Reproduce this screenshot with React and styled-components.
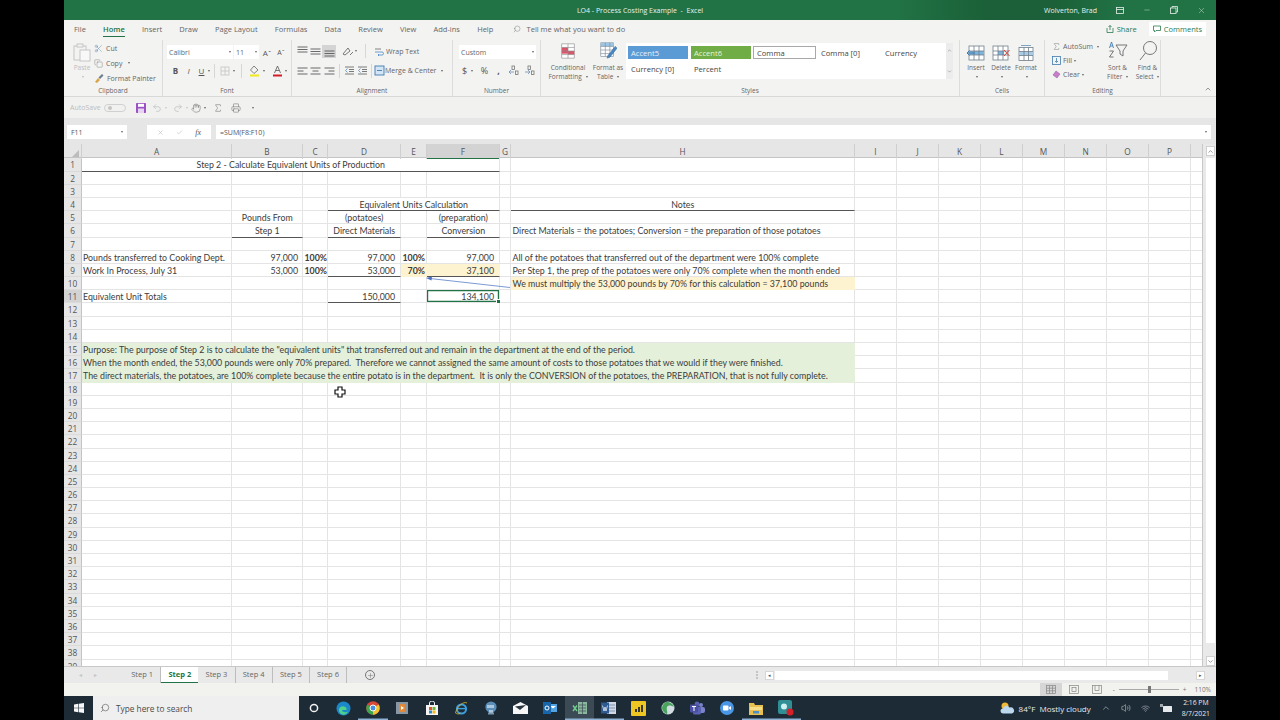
import React from 'react';
import styled, { createGlobalStyle } from 'styled-components';
import { Scissors, Copy, Search, X, Minus, ChevronUp, ChevronDown, Check, Plus, Wifi, Volume2, Undo2, Redo2, Sigma, Printer, Hand } from 'lucide-react';

const Global = createGlobalStyle`
  html, body { margin: 0; padding: 0; background: #000; }
  * { box-sizing: border-box; }
`;

const Screen = styled.div`
  width: 1280px;
  height: 720px;
  padding: 0 64px;
  background: #000;
  overflow: hidden;
  font-family: "Open Sans", "Noto Sans", sans-serif;
`;
const Win = styled.div`
  width: 1152px;
  height: 720px;
  display: flex;
  flex-direction: column;
  background: #f3f3f2;
  color: #555;
`;

/* title bar */
const TitleBar = styled.div`
  height: 20px;
  flex: none;
  display: grid;
  grid-template-columns: 1fr auto 1fr;
  align-items: center;
  background: linear-gradient(90deg, #217346 0%, #217346 72%, #1b6038 80%, #1b6038 86%, #217346 92%);
  color: #e8f1ec;
  font-size: 7px;
  white-space: pre;
`;
const TitleRight = styled.div`
  grid-column: 3;
  display: flex;
  align-items: center;
  justify-content: flex-end;
  gap: 19px;
  padding-right: 10px;
  svg { display: block; }
`;
const UserName = styled.span`
  margin-right: 0;
`;

/* menu tabs */
const MenuRow = styled.div`
  height: 18px;
  flex: none;
  display: flex;
  align-items: center;
  padding-left: 10px;
  gap: 17.2px;
  font-size: 7.5px;
  background: #f3f3f2;
`;
const MenuTab = styled.span`
  position: relative;
  color: ${p => (p.$on ? '#217346' : '#666')};
  font-weight: ${p => (p.$on ? 600 : 400)};
  ${p => p.$on && `
    &::after {
      content: '';
      position: absolute;
      left: 0; right: 0; bottom: -3px;
      height: 1.5px;
      background: #217346;
    }
  `}
`;
const TellMe = styled.span`
  display: flex;
  align-items: center;
  gap: 6px;
  color: #666;
  margin-left: 2px;
`;
const MenuRight = styled.div`
  margin-left: auto;
  display: flex;
  align-items: center;
  gap: 12px;
  padding-right: 10px;
`;
const ShareBtn = styled.span`
  display: flex;
  align-items: center;
  gap: 3px;
  color: #2c7a52;
`;
const CommentBtn = styled(ShareBtn)`
  background: #fff;
  padding: 2px 4px;
  height: 14px;
`;

/* ribbon */
const Ribbon = styled.div`
  height: 59px;
  flex: none;
  display: flex;
  background: #f3f3f2;
  border-bottom: 1px solid #d8d8d8;
  font-size: 7px;
  color: #666;
  position: relative;
`;
const Group = styled.div`
  width: ${p => p.$w}px;
  flex: none;
  display: flex;
  flex-direction: column;
  border-right: 1px solid #dcdcdc;
  margin: 2px 0 0;
`;
const GroupBody = styled.div`
  flex: 1;
  display: flex;
  padding: ${p => p.$pad || '0 0 0 4px'};
  gap: ${p => p.$gap || 0}px;
  min-height: 0;
`;
const GroupLabel = styled.div`
  height: 11px;
  text-align: center;
  font-size: 6.5px;
  line-height: 11px;
  color: #666;
`;
const Col = styled.div`
  display: flex;
  flex-direction: column;
  gap: ${p => p.$gap || 0}px;
  align-items: ${p => p.$align || 'stretch'};
  padding-top: ${p => p.$top || 0}px;
  width: ${p => (p.$w ? `${p.$w}px` : 'auto')};
`;
const Row = styled.div`
  display: flex;
  align-items: center;
  gap: ${p => p.$gap || 0}px;
  height: ${p => (p.$h ? `${p.$h}px` : 'auto')};
`;
const TinyBtn = styled.span`
  display: flex;
  align-items: center;
  justify-content: center;
  width: ${p => p.$w || 13}px;
  height: 13px;
  background: ${p => (p.$on ? '#d4d4d4' : 'transparent')};
  font-size: ${p => p.$fs || 8}px;
  font-weight: ${p => (p.$bold ? 700 : 400)};
  font-style: ${p => (p.$italic ? 'italic' : 'normal')};
  text-decoration: ${p => (p.$under ? 'underline' : 'none')};
  color: #555;
`;
const ComboBox = styled.span`
  display: flex;
  align-items: center;
  justify-content: space-between;
  width: ${p => p.$w}px;
  height: 14px;
  padding: 0 2px;
  background: #fff;
  margin-right: 1px;
  font-size: 7px;
  color: #666;
`;
const Caret = styled.span`
  width: 0;
  height: 0;
  border-left: 1.5px solid transparent;
  border-right: 1.5px solid transparent;
  border-top: 2px solid ${p => p.$color || '#666'};
  flex: none;
  margin-left: ${p => p.$ml || 0}px;
  margin-right: ${p => p.$mr || 0}px;
`;
const InlineCaret = styled(Caret)`
  display: inline-block;
  vertical-align: middle;
  margin-left: 2px;
`;
const VLine = styled.span`
  width: 1px;
  height: 14px;
  background: #d6d6d6;
  margin: 0 ${p => p.$m || 3}px;
`;
const BigLabel = styled.div`
  text-align: center;
  line-height: 9px;
  font-size: 6.5px;
  color: ${p => p.$color || '#666'};
`;
const Gallery = styled.div`
  width: 327px;
  height: 36px;
  margin: 3px 0 0 -2px;
  background: #fff;
  display: grid;
  grid-template-columns: 63px 62px 65px 64px 1fr 7px;
  grid-template-rows: 16px 18px;
  padding: 3px 0 0 2px;
`;
const StyleCell = styled.div`
  display: flex;
  align-items: center;
  height: 13px;
  width: 60px;
  padding-left: 3px;
  font-size: 7.6px;
  background: ${p => p.$bg || 'transparent'};
  color: ${p => p.$fg || '#444'};
  border: ${p => (p.$box ? '1px solid #a8a8a8' : 'none')};
`;
const GalleryBar = styled.div`
  grid-column: 6;
  grid-row: 1 / 3;
  margin-top: -3px;
  height: 36px;
  width: 7px;
  background: #ececec;
  display: flex;
  flex-direction: column;
  align-items: center;
  justify-content: space-between;
  padding: 5px 0;
`;
const Collapse = styled.span`
  position: absolute;
  right: 4px;
  bottom: 1px;
  color: #666;
`;

/* quick access */
const Qat = styled.div`
  height: 21px;
  flex: none;
  display: flex;
  align-items: center;
  padding-left: 6px;
  gap: 3px;
  background: #f1f1f0;
  font-size: 7px;
  color: #bdbdbd;
`;
const Toggle = styled.span`
  width: 22px;
  height: 8px;
  border: 1px solid #d0d0d0;
  border-radius: 4px;
  margin-right: 7px;
  display: flex;
  align-items: center;
  padding-left: 3px;
  &::before {
    content: '';
    width: 4px;
    height: 4px;
    border-radius: 50%;
    background: #c4c4c4;
  }
`;
const QatSlot = styled.span`
  display: flex;
  margin-left: ${p => p.$ml || 0}px;
`;

/* formula bar */
const FormulaBand = styled.div`
  height: 26px;
  flex: none;
  display: flex;
  gap: 5px;
  padding: 7px 5px 5px 3px;
  background: #e6e6e6;
  font-size: 7px;
  color: #555;
`;
const FormulaBox = styled.div`
  display: flex;
  align-items: center;
  background: #fff;
  height: 14px;
  width: ${p => (p.$w ? `${p.$w}px` : 'auto')};
  flex: ${p => (p.$w ? 'none' : 1)};
  justify-content: ${p => p.$just || 'flex-start'};
  padding: 0 4px;
  margin-right: ${p => p.$mr || 0}px;
`;
const Fx = styled.span`
  font-family: "Liberation Serif", serif;
  font-style: italic;
  font-size: 8px;
  color: #555;
`;

/* sheet */
const Sheet = styled.div`
  height: 522px;
  flex: none;
  display: flex;
  background: #fff;
`;
const GridWrap = styled.div`
  position: relative;
  width: 1139px;
  overflow: hidden;
  border-right: 1px solid #c8c8c8;
`;
const COLS = '18px 150px 71px 25px 73px 26px 73px 11px 344px 42px 42px 42px 42px 42px 42px 42px 42px 12px';
const HeadRow = styled.div`
  display: grid;
  grid-template-columns: ${COLS};
  height: 14.4px;
  background: #e6e6e6;
  border-bottom: 1px solid #c4c4c4;
`;
const ColHead = styled.div`
  font-size: 8.3px;
  line-height: 15px;
  text-align: center;
  color: #555;
  border-right: 1px solid #cfcfcf;
  background: ${p => (p.$on ? '#d3d3d3' : 'transparent')};
  box-shadow: ${p => (p.$on ? 'inset 0 -1px 0 #217346' : 'none')};
`;
const Corner = styled.div`
  position: relative;
  border-right: 1px solid #cfcfcf;
  &::after {
    content: '';
    position: absolute;
    right: 2px;
    bottom: 2px;
    border-left: 7px solid transparent;
    border-bottom: 7px solid #bcbcbc;
  }
`;
const Grid = styled.div`
  display: grid;
  grid-template-columns: ${COLS};
  grid-auto-rows: 13.19px;
  font-family: Lato, "Noto Sans", sans-serif;
  font-size: 8.82px;
  color: #3c3c3c;
`;
const RowHead = styled.div`
  background: ${p => (p.$on ? '#d3d3d3' : '#e6e6e6')};
  border-right: 1px solid #c4c4c4;
  border-bottom: 1px solid #dadada;
  font-family: "Open Sans", sans-serif;
  font-size: 8.3px;
  line-height: 13px;
  text-align: center;
  color: #555;
`;
const Cell = styled.div`
  grid-column: span ${p => p.$span || 1};
  position: relative;
  min-width: 0;
  white-space: pre;
  line-height: 13.8px;
  padding: 0 ${p => p.$pr ?? 1}px 0 ${p => p.$pl ?? 1.5}px;
  text-align: ${p => p.$align || 'left'};
  font-weight: ${p => (p.$bold ? 700 : 400)};
  background: ${p => p.$fill || 'transparent'};
  border-right: 1px solid ${p => p.$fill || '#e4e4e4'};
  border-bottom: 1px solid ${p => (p.$under ? '#555' : p.$fill || '#e4e4e4')};
  ${p => p.$sel && `
    box-shadow: inset 0 0 0 1.2px #217346;
    &::after {
      content: '';
      position: absolute;
      right: -2px;
      bottom: -2px;
      width: 3.5px;
      height: 3.5px;
      background: #217346;
      border: 0.5px solid #fff;
    }
  `}
`;
const ArrowLayer = styled.svg`
  position: absolute;
  left: 360px;
  top: 130px;
  pointer-events: none;
`;
const CursorMark = styled.svg`
  position: absolute;
  left: 270px;
  top: 242px;
  pointer-events: none;
`;
const VScroll = styled.div`
  width: 13px;
  background: #e9e9e9;
  display: flex;
  flex-direction: column;
  justify-content: space-between;
  align-items: center;
  padding: 2px 0 0 1px;
`;
const ScrollArrow = styled.span`
  width: 9px;
  height: 10px;
  flex: none;
  display: flex;
  align-items: center;
  justify-content: center;
  background: #fff;
  border: 1px solid #d0d0d0;
  color: #555;
`;
const VThumb = styled.div`
  flex: 1;
  width: 9px;
  background: #fff;
  margin: 2px 0 13px;
`;

/* sheet tabs */
const TabsBar = styled.div`
  height: 17px;
  flex: none;
  display: flex;
  align-items: center;
  background: #e9e9e9;
  border-top: 1px solid #c8c8c8;
  font-size: 7.5px;
  color: #666;
`;
const TabNav = styled.span`
  width: 60px;
  display: flex;
  gap: 12px;
  padding-left: 15px;
  color: #c4c4c4;
  font-size: 6px;
`;
const SheetTab = styled.span`
  width: 37.2px;
  height: 16px;
  line-height: 15px;
  text-align: center;
  flex: none;
  border-right: 1px solid #bdbdbd;
  ${p => p.$on && `
    background: #fff;
    color: #217346;
    font-weight: 700;
    border-right: none;
    border-bottom: 1.5px solid #217346;
  `}
`;
const AddSheet = styled.span`
  width: 10px;
  height: 10px;
  margin-left: 18px;
  border: 1px solid #777;
  border-radius: 50%;
  display: flex;
  align-items: center;
  justify-content: center;
  color: #666;
`;
const Grip = styled.span`
  margin-left: auto;
  margin-right: 7px;
  width: 2px;
  height: 8px;
  border-left: 2px dotted #c4c4c4;
`;
const HScroll = styled.div`
  width: 440px;
  height: 9px;
  margin-right: 11px;
  display: flex;
  align-items: stretch;
  gap: 1px;
`;
const HArrow = styled.span`
  width: 9px;
  flex: none;
  background: #fff;
  border: 1px solid #d6d6d6;
  display: flex;
  align-items: center;
  justify-content: center;
  font-size: 5px;
  color: #555;
`;
const HThumb = styled.span`
  flex: 1;
  background: #fff;
  margin-right: 27px;
`;

/* status bar */
const StatusBar = styled.div`
  height: 13px;
  flex: none;
  display: flex;
  align-items: center;
  justify-content: flex-end;
  background: #f2f2ee;
  font-size: 6.5px;
  color: #777;
  padding-right: 5px;
`;
const ViewBtn = styled.span`
  width: 22px;
  height: 13px;
  display: flex;
  align-items: center;
  justify-content: center;
  background: ${p => (p.$on ? '#d6d6d6' : 'transparent')};
  margin-right: 1px;
`;
const ZoomTrack = styled.span`
  position: relative;
  width: 60px;
  height: 1px;
  margin: 0 4px;
  background: #aaa;
  &::after {
    content: '';
    position: absolute;
    left: 29px;
    top: -3px;
    width: 3px;
    height: 7px;
    background: #777;
  }
`;
const StatusText = styled.span`
  margin-left: ${p => p.$ml || 0}px;
`;

/* taskbar */
const Taskbar = styled.div`
  height: 24px;
  flex: none;
  display: flex;
  align-items: center;
  background: #1d2b36;
  color: #e6e9ec;
  font-size: 8px;
`;
const StartBtn = styled.span`
  width: 29px;
  display: flex;
  justify-content: center;
`;
const SearchBox = styled.div`
  width: 206px;
  height: 24px;
  background: #efefef;
  display: flex;
  align-items: center;
  gap: 6px;
  padding-left: 7px;
  color: #4a4a4a;
  font-size: 8.3px;
`;
const TaskIcons = styled.div`
  display: flex;
`;
const TaskIcon = styled.span`
  width: 29.5px;
  height: 24px;
  display: flex;
  align-items: center;
  justify-content: center;
  background: ${p => (p.$active ? '#3b4a55' : 'transparent')};
  box-shadow: ${p => (p.$open ? 'inset 0 -1.5px 0 #8fb4d6' : 'none')};
`;
const Tray = styled.div`
  margin-left: auto;
  display: flex;
  align-items: center;
  gap: 10px;
  padding-right: 6px;
`;
const Weather = styled.span`
  display: flex;
  align-items: center;
  gap: 4px;
  white-space: pre;
`;
const Clock = styled.span`
  text-align: center;
  font-size: 6.8px;
  line-height: 11px;
`;

/* small drawn icons */
const Lines = ({ w = [10, 10, 10], y = [3, 6, 9], x = 'left' }) => (
  <svg width="11" height="12" viewBox="0 0 11 12" stroke="#5a5a5a" strokeWidth="0.9">
    {w.map((l, i) => {
      const s = x === 'left' ? 0.5 : x === 'center' ? (11 - l) / 2 : 10.5 - l;
      return <line key={i} x1={s} x2={s + l} y1={y[i]} y2={y[i]} />;
    })}
  </svg>
);
const Indent = () => (
  <svg width="11" height="11" viewBox="0 0 11 11" fill="none" stroke="#5a5a5a" strokeWidth="0.8">
    <path d="M1 2h9M5 4.5h5M5 6.5h5M1 9h9" />
    <path d="M3.5 3.5 1.5 5.5l2 2" stroke="#4a86c5" />
  </svg>
);
const InsertCellIcon = () => (
  <svg width="20" height="18" viewBox="0 0 20 18" fill="none" stroke="#6f7f8c" strokeWidth="0.8">
    <rect x="3" y="2" width="15" height="14" fill="#fff" />
    <rect x="3" y="7" width="15" height="4" fill="#7fb4dc" stroke="none" />
    <path d="M3 7h15M3 11h15M8 2v14M13 2v14" />
    <path d="M9 9H1M3.500 6.500 1 9l2.500 2.500" stroke="#3e7cb1" strokeWidth="1" />
  </svg>
);
const DeleteCellIcon = () => (
  <svg width="20" height="18" viewBox="0 0 20 18" fill="none" stroke="#6f7f8c" strokeWidth="0.8">
    <rect x="2" y="2" width="15" height="14" fill="#fff" />
    <rect x="7" y="7" width="6" height="4" fill="#7fb4dc" stroke="none" />
    <path d="M2 7h15M2 11h15M7 2v14M12 2v14" />
    <path d="M13 6l5.500 6M18.500 6 13 12" stroke="#d2443c" strokeWidth="1" />
  </svg>
);
const FormatCellIcon = () => (
  <svg width="20" height="18" viewBox="0 0 20 18" fill="none" stroke="#6f7f8c" strokeWidth="0.8">
    <rect x="3" y="3.500" width="14" height="13" fill="#fff" />
    <rect x="3" y="7.500" width="14" height="4" fill="#a9cbe6" stroke="none" />
    <path d="M3 7.500h14M3 11.500h14M8 3.500v13M12.500 3.500v13" />
    <path d="M5 1.500h10" stroke="#5d93c0" />
  </svg>
);
const CondIcon = () => (
  <svg width="16" height="16" viewBox="0 0 16 18" fill="none" stroke="#8a8a8a" strokeWidth="0.7">
    <rect x="1" y="1" width="14" height="16" fill="#fff" />
    <rect x="1" y="5" width="7" height="7" fill="#d9566a" stroke="none" />
    <rect x="8" y="9" width="7" height="4" fill="#d9566a" stroke="none" />
    <path d="M1 5h14M1 9h14M1 13h14M8 1v16" />
  </svg>
);
const FmtTableIcon = () => (
  <svg width="18" height="18" viewBox="0 0 20 20" fill="none" stroke="#7b8a96" strokeWidth="0.7">
    <rect x="2" y="2" width="14" height="15" fill="#fff" />
    <rect x="2" y="2" width="14" height="4" fill="#9cc6e4" stroke="none" />
    <path d="M2 6h14M2 10h14M2 14h14M7 2v15M12 2v15" />
    <path d="M18 6 10 16l-1 3 3-1 8-10z" fill="#4a86c5" stroke="#3a6f9e" />
  </svg>
);
const PasteIcon = () => (
  <svg width="18" height="19" viewBox="0 0 18 19" fill="#f3f3f2" stroke="#c6c6c6" strokeWidth="1">
    <rect x="1" y="3" width="12" height="14" />
    <rect x="4" y="1" width="6" height="3" />
    <rect x="7" y="7" width="10" height="11" fill="#f8f8f8" />
  </svg>
);
const PainterIcon = () => (
  <svg width="10" height="10" viewBox="0 0 10 10" fill="none">
    <path d="M1 9 4 5l2 2-3 3z" fill="#d9a54a" />
    <path d="M4.5 4.5 8 1l1.5 1.5L6 6z" fill="#6a7d8e" />
  </svg>
);
const BorderIcon = () => (
  <svg width="10" height="10" viewBox="0 0 10 10" fill="#f3f3f2" stroke="#c4c4c4" strokeWidth="0.8">
    <rect x="1" y="1" width="8" height="8" />
    <path d="M5 1v8M1 5h8" />
  </svg>
);
const FillIcon = () => (
  <svg width="11" height="12" viewBox="0 0 11 12">
    <path d="M5 1 9 5 5 8.5 1.5 5z" fill="none" stroke="#666" strokeWidth="0.8" />
    <rect x="1" y="9.5" width="9" height="2" fill="#f2ea1c" />
  </svg>
);
const ColorAIcon = () => (
  <svg width="11" height="12" viewBox="0 0 11 12">
    <path d="M2.5 8 5.5 1l3 7M3.7 5.5h3.6" fill="none" stroke="#666" strokeWidth="0.9" />
    <rect x="1" y="9.5" width="9" height="2" fill="#d11f2a" />
  </svg>
);
const DecimalIcon = ({ flip }) => (
  <svg width="11" height="11" viewBox="0 0 11 11" fill="none" stroke="#6a90b4" strokeWidth="0.8">
    <path d={flip ? 'M6 7h-5M4 5 6 7 4 9' : 'M1 7h5M3 5 1 7l2 2'} />
    <rect x="4" y="1" width="2.5" height="3.5" stroke="#777" />
    <rect x="7.5" y="6" width="2.5" height="3.5" stroke="#777" />
  </svg>
);
const WrapIcon = () => (
  <svg width="10" height="11" viewBox="0 0 10 11" fill="none" stroke="#4a86c5" strokeWidth="0.8">
    <path d="M1 6h7a1.5 1.5 0 0 1 0 3H4M5 8 4 9l1 1" />
    <path d="M1 3h6" stroke="#666" />
  </svg>
);
const MergeIcon = () => (
  <svg width="11" height="11" viewBox="0 0 11 11" fill="#d4e6f5" stroke="#3e7cb1" strokeWidth="0.9">
    <rect x="1" y="1" width="9" height="9" />
    <path d="M3 5.5h5" />
  </svg>
);
const OrientIcon = () => (
  <svg width="12" height="11" viewBox="0 0 12 11" fill="none" stroke="#6a6a6a" strokeWidth="0.9">
    <path d="M1 8 6 2l2 3-5 4zM8 9l3-3" />
  </svg>
);
const SortIcon = () => (
  <svg width="20" height="20" viewBox="0 0 20 20" fill="none" stroke="#6a6a6a" strokeWidth="0.9">
    <path d="M1.5 8 3.5 2l2 6M2.3 6h2.4" stroke="#3e7cb1" />
    <path d="M1.5 11h4l-4 6h4" />
    <path d="M8 5h11l-4 6v5l-3-2v-3z" />
  </svg>
);
const FindIcon = () => (
  <svg width="20" height="21" viewBox="0 0 20 21" fill="none" stroke="#6a6a6a" strokeWidth="0.9">
    <circle cx="12" cy="8" r="6.5" />
    <path d="M7.5 13 2 20" />
  </svg>
);
const SaveIcon = () => (
  <svg width="10" height="10" viewBox="0 0 10 10">
    <rect width="10" height="10" rx="0.8" fill="#9a52c4" />
    <rect x="2" y="0.800" width="6" height="3" fill="#fff" />
    <rect x="2" y="5.500" width="6" height="4.500" fill="#e6d4f0" />
  </svg>
);
const NormalViewIcon = () => (
  <svg width="10" height="9" viewBox="0 0 10 9" fill="none" stroke="#858585" strokeWidth="0.7">
    <rect x="0.500" y="0.500" width="9" height="8" />
    <path d="M0.500 3.200h9M0.500 5.800h9M3.500 0.500v8M6.500 0.500v8" />
  </svg>
);
const PageViewIcon = () => (
  <svg width="10" height="9" viewBox="0 0 10 9" fill="none" stroke="#858585" strokeWidth="0.7">
    <rect x="0.500" y="0.500" width="9" height="8" />
    <rect x="3" y="2.500" width="4" height="4" />
  </svg>
);
const BreakViewIcon = () => (
  <svg width="10" height="9" viewBox="0 0 10 9" fill="none" stroke="#858585" strokeWidth="0.7">
    <rect x="0.500" y="0.500" width="9" height="8" />
    <path d="M3 0.500v5h4v-5" />
  </svg>
);
const WinLogo = () => (
  <svg width="10" height="10" viewBox="0 0 10 10" fill="#f4f6f8">
    <path d="M0 1.4 4.2.8v3.9H0zM4.8.7 10 0v4.7H4.8zM0 5.3h4.2v3.9L0 8.6zM4.8 5.3H10V10l-5.2-.7z" />
  </svg>
);
const Ring = () => (
  <svg width="10" height="10" viewBox="0 0 10 10" fill="none" stroke="#f2f2f2" strokeWidth="1.5">
    <circle cx="5" cy="5" r="3.6" />
  </svg>
);
const Edge = () => (
  <svg width="15" height="15" viewBox="0 0 15 15">
    <circle cx="7.5" cy="7.5" r="7" fill="#1b88c9" />
    <path d="M3 9c0-3 3-4 5-3.6 2 .4 3 2 2.5 3.6H6c0 2 3 3 6 1.5-1 2.5-3.5 3.5-5.5 3C4 13 3 11 3 9z" fill="#4fd08c" />
  </svg>
);
const Chrome = () => (
  <svg width="14" height="14" viewBox="0 0 14 14">
    <circle cx="7" cy="7" r="6.8" fill="#d9473b" />
    <path d="M7 7 1.2 3.6A6.8 6.8 0 0 0 7 13.8z" fill="#3da54c" />
    <path d="M7 7v6.8A6.8 6.8 0 0 0 12.8 3.6z" fill="#f1c232" />
    <circle cx="7" cy="7" r="3" fill="#4a8fe0" stroke="#fff" />
  </svg>
);
const Slides = () => (
  <svg width="12" height="12" viewBox="0 0 12 12">
    <rect width="12" height="12" fill="#8796a2" />
    <rect x="3" y="2" width="6" height="8" fill="#e08a3c" />
    <path d="M5 4v4l3-2z" fill="#fff" />
  </svg>
);
const Store = () => (
  <svg width="14" height="14" viewBox="0 0 14 14">
    <path d="M1 4h12v10H1z" fill="#f4f4f4" />
    <path d="M4.5 4V2a2.5 2 0 0 1 5 0v2" fill="none" stroke="#f4f4f4" />
    <rect x="4" y="6" width="3" height="3" fill="#e2552d" />
    <rect x="7.5" y="6" width="3" height="3" fill="#6fb53b" />
    <rect x="4" y="9.5" width="3" height="3" fill="#2a8ad4" />
    <rect x="7.5" y="9.5" width="3" height="3" fill="#f3b61f" />
  </svg>
);
const IE = () => (
  <svg width="15" height="15" viewBox="0 0 15 15" fill="none">
    <circle cx="7.5" cy="8" r="4.6" stroke="#3ba0dd" strokeWidth="2" />
    <path d="M3 7.6h9" stroke="#3ba0dd" strokeWidth="1.4" />
    <path d="M13 2C10 0 3 5 1.5 12c3 2 5 0 5 0" stroke="#e8b92e" strokeWidth="0.8" />
  </svg>
);
const Globe = () => (
  <svg width="14" height="15" viewBox="0 0 14 15">
    <circle cx="7" cy="6" r="5.6" fill="#5b8fb9" />
    <path d="M3 4h7v3H3zM5 9h4v3H5z" fill="#a9c6de" />
    <rect x="4" y="11.5" width="6" height="2" fill="#7c98b0" />
  </svg>
);
const Mail = () => (
  <svg width="15" height="12" viewBox="0 0 15 12">
    <path d="M0 4 7.5 0 15 4v8H0z" fill="#f7f7f7" />
    <path d="M2 4.5 13 3 7 8z" fill="#29353f" />
  </svg>
);
const Outlook = () => (
  <svg width="14" height="12" viewBox="0 0 14 12">
    <rect x="5" y="2" width="9" height="8" fill="#52a3e0" />
    <path d="M7 4h6l-3 2.5z" fill="#fff" />
    <rect width="8" height="12" fill="#1766ac" />
    <circle cx="4" cy="6" r="2" fill="none" stroke="#fff" />
  </svg>
);
const ExcelIcon = () => (
  <svg width="15" height="14" viewBox="0 0 15 14">
    <rect x="6" y="1" width="9" height="12" fill="#8bb79d" />
    <path d="M7 4h7M7 7h7M7 10h7M10.5 1v12" stroke="#3b4a55" strokeWidth="0.7" />
    <path d="M1 4.5 5 10M5 4.5 1 10" stroke="#6fd08e" strokeWidth="1.4" />
  </svg>
);
const WordIcon = () => (
  <svg width="15" height="14" viewBox="0 0 15 14">
    <rect x="6" y="1" width="9" height="12" fill="#cfd8e3" />
    <path d="M8 4h6M8 7h6M8 10h6" stroke="#5a7a9e" strokeWidth="0.7" />
    <rect width="8" height="11" y="1.5" fill="#2e5a94" />
    <path d="M1.5 4.5 3 10l1-4 1 4 1.5-5.5" stroke="#fff" strokeWidth="0.7" fill="none" />
  </svg>
);
const PowerBi = () => (
  <svg width="15" height="15" viewBox="0 0 15 15">
    <rect width="15" height="15" rx="1" fill="#eec722" />
    <rect x="4" y="8" width="2" height="3" fill="#3a3a2a" />
    <rect x="7" y="6" width="2" height="5" fill="#3a3a2a" />
    <rect x="10" y="4" width="2" height="7" fill="#3a3a2a" />
  </svg>
);
const GreenGlobe = () => (
  <svg width="14" height="14" viewBox="0 0 14 14">
    <circle cx="7" cy="7" r="6.5" fill="#d2dde3" />
    <path d="M4 1.500C8 0 12 3 13 6c-3-2-6-2-7 0-1 2 1 5 0 7.300C3 12 1 9 1 7c0-2 1.500-4 3-5.500z" fill="#4aa35c" />
  </svg>
);
const Teams = () => (
  <svg width="15" height="14" viewBox="0 0 15 14">
    <circle cx="11" cy="4" r="2" fill="#7b83c9" />
    <rect x="9" y="6" width="6" height="6" rx="2" fill="#7b83c9" />
    <circle cx="7" cy="3" r="2.4" fill="#5a62b3" />
    <rect x="3" y="5.500" width="8" height="8" rx="1.500" fill="#5a62b3" />
    <rect y="3.500" width="8" height="8" rx="1" fill="#4a50a3" />
    <path d="M2 5.500h4M4 5.500v4.500" stroke="#fff" strokeWidth="1" />
  </svg>
);
const ZoomApp = () => (
  <svg width="14" height="14" viewBox="0 0 14 14">
    <circle cx="7" cy="7" r="7" fill="#4a96e6" />
    <rect x="3" y="4.500" width="5.500" height="5" rx="1" fill="#fff" />
    <path d="M9 6.500 11 5v4L9 7.500z" fill="#fff" />
  </svg>
);
const Folder = () => (
  <svg width="14" height="13" viewBox="0 0 14 13">
    <path d="M0 1h5l1 2h8v10H0z" fill="#e8c052" />
    <rect x="1" y="5" width="12" height="3" fill="#f5dd8a" />
    <rect x="4" y="9" width="6" height="2.500" fill="#4b90c8" />
  </svg>
);
const Recorder = () => (
  <svg width="16" height="16" viewBox="0 0 16 16">
    <rect width="14" height="14" rx="2" fill="#2f8f95" />
    <circle cx="6" cy="6.500" r="3" fill="#cfeff2" />
    <circle cx="12" cy="12" r="3.500" fill="#d5202a" />
  </svg>
);
const CloudSun = () => (
  <svg width="15" height="12" viewBox="0 0 15 12">
    <circle cx="5" cy="4" r="3.500" fill="#f0b93a" />
    <path d="M3 11.500a2.500 2.500 0 0 1 0-5 3.500 3.500 0 0 1 6.500-1 3 3 0 0 1 2.500 6z" fill="#bcd8ee" />
  </svg>
);
const BatteryMark = () => (
  <svg width="12" height="9" viewBox="0 0 12 9" fill="#e6e9ec">
    <rect x="3" y="2" width="9" height="6" rx="0.5" />
    <rect y="0" width="3" height="3" fill="#a0a8ae" />
  </svg>
);

/* sheet data */
const LETTERS = ['A', 'B', 'C', 'D', 'E', 'F', 'G', 'H', 'I', 'J', 'K', 'L', 'M', 'N', 'O', 'P', ''];
const YELLOW = '#fdf3d0';
const GREEN = '#e4f0da';

const SHEET = {
  1: { A: { span: 6, text: 'Step 2 - Calculate Equivalent Units of Production', align: 'center', under: true } },
  4: {
    D: { span: 3, text: 'Equivalent Units Calculation', align: 'center', under: true },
    H: { text: 'Notes', align: 'center', under: true },
  },
  5: {
    B: { text: 'Pounds From', align: 'center' },
    D: { text: '(potatoes)', align: 'center' },
    F: { text: '(preparation)', align: 'center' },
  },
  6: {
    B: { text: 'Step 1', align: 'center', under: true },
    D: { text: 'Direct Materials', align: 'center', under: true },
    F: { text: 'Conversion', align: 'center', under: true },
    H: { text: 'Direct Materials = the potatoes; Conversion = the preparation of those potatoes' },
  },
  8: {
    A: { text: 'Pounds transferred to Cooking Dept.', pl: 1 },
    B: { text: '97,000', align: 'right', pr: 4 },
    C: { text: '100%', align: 'right', bold: true },
    D: { text: '97,000', align: 'right', pr: 5 },
    E: { text: '100%', align: 'right', bold: true },
    F: { text: '97,000', align: 'right', pr: 5 },
    H: { text: 'All of the potatoes that transferred out of the department were 100% complete' },
  },
  9: {
    A: { text: 'Work In Process, July 31', pl: 1 },
    B: { text: '53,000', align: 'right', pr: 4 },
    C: { text: '100%', align: 'right', bold: true },
    D: { text: '53,000', align: 'right', pr: 5, under: true },
    E: { text: '70%', align: 'right', bold: true, fill: YELLOW },
    F: { text: '37,100', align: 'right', pr: 5, under: true, fill: YELLOW },
    H: { text: 'Per Step 1, the prep of the potatoes were only 70% complete when the month ended' },
  },
  10: { H: { text: 'We must multiply the 53,000 pounds by 70% for this calculation = 37,100 pounds', fill: YELLOW } },
  11: {
    A: { text: 'Equivalent Unit Totals', pl: 1 },
    D: { text: '150,000', align: 'right', pr: 5, under: true },
    F: { text: '134,100', align: 'right', pr: 5, sel: true },
  },
  15: { A: { span: 8, pl: 1, fill: GREEN, text: 'Purpose: The purpose of Step 2 is to calculate the "equivalent units" that transferred out and remain in the department at the end of the period.' } },
  16: { A: { span: 8, pl: 1, fill: GREEN, text: 'When the month ended, the 53,000 pounds were only 70% prepared.  Therefore we cannot assigned the same amount of costs to those potatoes that we would if they were finished.' } },
  17: { A: { span: 8, pl: 1, fill: GREEN, text: 'The direct materials, the potatoes, are 100% complete because the entire potato is in the department.  It is only the CONVERSION of the potatoes, the PREPARATION, that is not fully complete.' } },
};

function SheetRow({ n }) {
  const data = SHEET[n] || {};
  const cells = [];
  for (let i = 0; i < LETTERS.length; i++) {
    const key = LETTERS[i] || 'Q';
    const c = data[key];
    if (c) {
      cells.push(
        <Cell key={key} $span={c.span} $align={c.align} $bold={c.bold} $under={c.under} $fill={c.fill} $pr={c.pr} $pl={c.pl} $sel={c.sel}>
          {c.text}
        </Cell>
      );
      if (c.span) i += c.span - 1;
    } else {
      cells.push(<Cell key={key} />);
    }
  }
  return (
    <>
      <RowHead $on={n === 11}>{n}</RowHead>
      {cells}
    </>
  );
}

const MENU = ['File', 'Home', 'Insert', 'Draw', 'Page Layout', 'Formulas', 'Data', 'Review', 'View', 'Add-ins', 'Help'];
const ROWS = Array.from({ length: 39 }, (_, i) => i + 1);
const CELL_BTNS = [
  ['Insert', <InsertCellIcon key="i" />],
  ['Delete', <DeleteCellIcon key="d" />],
  ['Format', <FormatCellIcon key="f" />],
];

export default function App() {
  return (
    <Screen>
      <Global />
      <Win>
        <TitleBar>
          <span />
          <span>LO4 - Process Costing Example  -  Excel</span>
          <TitleRight>
            <UserName>Wolverton, Brad</UserName>
            <svg width="8" height="7" viewBox="0 0 8 7" fill="none" stroke="#e8f1ec" strokeWidth="0.8"><rect x="0.500" y="0.500" width="7" height="6" /><path d="M0.500 2.500h7" /></svg>
            <Minus size={8} strokeWidth={1.2} />
            <svg width="8" height="8" viewBox="0 0 8 8" fill="none" stroke="#e8f1ec" strokeWidth="0.8"><rect x="0.500" y="2" width="5.500" height="5.500" /><path d="M2 2V0.500h5.500V6H6" /></svg>
            <X size={9} strokeWidth={1.1} />
          </TitleRight>
        </TitleBar>

        <MenuRow>
          {MENU.map(m => <MenuTab key={m} $on={m === 'Home'}>{m}</MenuTab>)}
          <TellMe><Search size={8} strokeWidth={1.2} style={{ transform: 'scaleX(-1)' }} />Tell me what you want to do</TellMe>
          <MenuRight>
            <ShareBtn>
              <svg width="8" height="8" viewBox="0 0 8 8" fill="none" stroke="#2c7a52" strokeWidth="0.8"><path d="M1 3v4.500h6V3M4 5V0.500M2.500 2 4 0.500 5.500 2" /></svg>
              Share
            </ShareBtn>
            <CommentBtn>
              <svg width="8" height="8" viewBox="0 0 8 8" fill="none" stroke="#2c7a52" strokeWidth="0.8"><path d="M0.500 1h7v4.500H3L1.500 7V5.500h-1z" /></svg>
              Comments
            </CommentBtn>
          </MenuRight>
        </MenuRow>

        <Ribbon>
          <Group $w={99}>
            <GroupBody $pad="0 0 0 9px" $gap={3}>
              <Col $align="center" $top={3} $gap={1}>
                <PasteIcon />
                <BigLabel $color="#bdbdbd">Paste<br /><InlineCaret $color="#bdbdbd" /></BigLabel>
              </Col>
              <Col $top={2} $gap={1}>
                <Row $h={13} $gap={3}><Scissors size={9} color="#4a7ba6" strokeWidth={1.1} />Cut</Row>
                <Row $h={14} $gap={3}><Copy size={9} color="#666" strokeWidth={1} />Copy <Caret $ml={3} /></Row>
                <Row $h={14} $gap={3}><PainterIcon />Format Painter</Row>
              </Col>
            </GroupBody>
            <GroupLabel>Clipboard</GroupLabel>
          </Group>

          <Group $w={129}>
            <GroupBody>
              <Col $top={5} $gap={5}>
                <Row $h={14}>
                  <ComboBox $w={66}>Calibri<Caret /></ComboBox>
                  <ComboBox $w={25}>11<Caret /></ComboBox>
                  <TinyBtn $w={14} $fs={8}>Aˆ</TinyBtn>
                  <TinyBtn $w={14} $fs={7}>Aˇ</TinyBtn>
                </Row>
                <Row $h={13} style={{ paddingLeft: 2 }}>
                  <TinyBtn $bold>B</TinyBtn>
                  <TinyBtn $italic>I</TinyBtn>
                  <TinyBtn $under>U</TinyBtn>
                  <Caret />
                  <VLine $m={4} />
                  <TinyBtn $w={12}><BorderIcon /></TinyBtn>
                  <Caret $ml={2} />
                  <VLine $m={6} />
                  <TinyBtn $w={12}><FillIcon /></TinyBtn>
                  <Caret $ml={3} $mr={6} />
                  <TinyBtn $w={12}><ColorAIcon /></TinyBtn>
                  <Caret $ml={2} />
                </Row>
              </Col>
            </GroupBody>
            <GroupLabel>Font</GroupLabel>
          </Group>

          <Group $w={161}>
            <GroupBody $pad="0 0 0 3px">
              <Col $top={4} $gap={6}>
                <Row $h={14}>
                  <TinyBtn $w={14}><Lines y={[2, 4.5, 7]} /></TinyBtn>
                  <TinyBtn $w={13}><Lines y={[4, 6.5, 9]} /></TinyBtn>
                  <TinyBtn $w={14} $on><Lines y={[6, 8.5, 11]} /></TinyBtn>
                  <TinyBtn $w={14} style={{ marginLeft: 5 }}><OrientIcon /></TinyBtn>
                  <Caret />
                  <VLine $m={8} />
                  <Row $gap={2}><WrapIcon />Wrap Text</Row>
                </Row>
                <Row $h={13}>
                  <TinyBtn $w={14}><Lines x="left" w={[10, 6, 10]} /></TinyBtn>
                  <TinyBtn $w={13}><Lines x="center" w={[10, 6, 10]} /></TinyBtn>
                  <TinyBtn $w={14}><Lines x="right" w={[10, 6, 10]} /></TinyBtn>
                  <VLine $m={3} />
                  <TinyBtn $w={13}><Indent /></TinyBtn>
                  <TinyBtn $w={13}><Indent /></TinyBtn>
                  <VLine $m={2} />
                  <Row><MergeIcon />Merge &amp; Center <Caret $ml={5} /></Row>
                </Row>
              </Col>
            </GroupBody>
            <GroupLabel>Alignment</GroupLabel>
          </Group>

          <Group $w={88}>
            <GroupBody $pad="0 0 0 6px">
              <Col $top={5} $gap={5}>
                <ComboBox $w={77}>Custom<Caret /></ComboBox>
                <Row $h={13} $gap={1}>
                  <TinyBtn $w={11} $fs={9}>$</TinyBtn>
                  <Caret $mr={4} />
                  <TinyBtn $w={13} $fs={9}>%</TinyBtn>
                  <TinyBtn $w={13} $fs={9} $bold>,</TinyBtn>
                  <TinyBtn $w={15}><DecimalIcon /></TinyBtn>
                  <TinyBtn $w={15}><DecimalIcon flip /></TinyBtn>
                </Row>
              </Col>
            </GroupBody>
            <GroupLabel>Number</GroupLabel>
          </Group>

          <Group $w={419}>
            <GroupBody $pad="0 0 0 7px">
              <Col $align="center" $w={40} $top={3} $gap={4}>
                <CondIcon />
                <BigLabel>Conditional<br />Formatting <InlineCaret /></BigLabel>
              </Col>
              <Col $align="center" $w={40} $top={1} $gap={4}>
                <FmtTableIcon />
                <BigLabel>Format as<br />Table <InlineCaret /></BigLabel>
              </Col>
              <Gallery>
                <StyleCell $bg="#5b9bd5" $fg="#e6f0fa">Accent5</StyleCell>
                <StyleCell $bg="#70ad47" $fg="#e6f4da">Accent6</StyleCell>
                <StyleCell $box style={{ width: 63 }}>Comma</StyleCell>
                <StyleCell>Comma [0]</StyleCell>
                <StyleCell>Currency</StyleCell>
                <GalleryBar>
                  <ChevronUp size={5} /><ChevronDown size={5} />
                </GalleryBar>
                <StyleCell style={{ gridColumn: 1 }}>Currency [0]</StyleCell>
                <StyleCell>Percent</StyleCell>
              </Gallery>
            </GroupBody>
            <GroupLabel>Styles</GroupLabel>
          </Group>

          <Group $w={85}>
            <GroupBody $pad="0 0 0 5px" $gap={3}>
              {CELL_BTNS.map(([t, icon]) => (
                <Col key={t} $align="center" $w={22} $top={4} $gap={1}>
                  {icon}
                  <BigLabel>{t}<br /><InlineCaret /></BigLabel>
                </Col>
              ))}
            </GroupBody>
            <GroupLabel>Cells</GroupLabel>
          </Group>

          <Group $w={116}>
            <GroupBody $pad="0 0 0 7px" $gap={6}>
              <Col $top={0} $w={50} $gap={1}>
                <Row $h={13} $gap={2}><Sigma size={9} strokeWidth={1.1} />AutoSum <Caret $ml={2} /></Row>
                <Row $h={13} $gap={2}>
                  <svg width="9" height="9" viewBox="0 0 9 9" fill="none" stroke="#3e7cb1" strokeWidth="0.8"><rect x="0.500" y="0.500" width="8" height="8" /><path d="M4.500 2v4M3 5l1.500 1.500L6 5" /></svg>
                  Fill <Caret />
                </Row>
                <Row $h={13} $gap={2}>
                  <svg width="9" height="9" viewBox="0 0 9 9"><path d="M4 1 8 4 5 8 1 5z" fill="#c77fc9" stroke="#8a5a9a" strokeWidth="0.5" /></svg>
                  Clear <Caret />
                </Row>
              </Col>
              <Col $align="center" $w={24} $gap={3}>
                <SortIcon />
                <BigLabel>Sort &amp;<br />Filter <InlineCaret /></BigLabel>
              </Col>
              <Col $align="center" $w={26} $gap={2}>
                <FindIcon />
                <BigLabel>Find &amp;<br />Select <InlineCaret /></BigLabel>
              </Col>
            </GroupBody>
            <GroupLabel>Editing</GroupLabel>
          </Group>
          <Collapse><ChevronUp size={8} /></Collapse>
        </Ribbon>

        <Qat>
          <span>AutoSave</span>
          <Toggle />
          <SaveIcon />
          <QatSlot $ml={3}><Undo2 size={10} color="#c4c4c4" /></QatSlot>
          <Caret $color="#c8c8c8" />
          <QatSlot $ml={3}><Redo2 size={10} color="#c4c4c4" /></QatSlot>
          <Caret $color="#c8c8c8" />
          <Hand size={10} color="#666" strokeWidth={1.2} />
          <Caret />
          <QatSlot $ml={4}><Sigma size={10} color="#666" strokeWidth={1.2} /></QatSlot>
          <QatSlot $ml={5}><Printer size={10} color="#666" strokeWidth={1.2} /></QatSlot>
          <Caret $ml={8} />
        </Qat>

        <FormulaBand>
          <FormulaBox $w={60} $just="space-between" $mr={15}>F11<Caret /></FormulaBox>
          <FormulaBox $w={64} $just="space-around">
            <X size={7} color="#bcbcbc" />
            <Check size={7} color="#bcbcbc" />
            <Fx>fx</Fx>
          </FormulaBox>
          <FormulaBox $just="space-between">
            =SUM(F8:F10)
            <Caret />
          </FormulaBox>
        </FormulaBand>

        <Sheet>
          <GridWrap>
            <HeadRow>
              <Corner />
              {LETTERS.map((l, i) => <ColHead key={i} $on={l === 'F'}>{l}</ColHead>)}
            </HeadRow>
            <Grid>
              {ROWS.map(n => <SheetRow key={n} n={n} />)}
            </Grid>
            <ArrowLayer width="90" height="14" viewBox="0 0 90 14">
              <path d="M86 13.500 6 4.500" stroke="#5b7fc7" strokeWidth="0.8" fill="none" />
              <path d="M2 4 8 2.500 7.500 6.500z" fill="#4a6fc0" />
            </ArrowLayer>
            <CursorMark width="12" height="12" viewBox="0 0 12 12">
              <path d="M4 1h4v3h3v4H8v3H4V8H1V4h3z" fill="#fff" stroke="#111" strokeWidth="1.2" />
            </CursorMark>
          </GridWrap>
          <VScroll>
            <ScrollArrow><ChevronUp size={7} /></ScrollArrow>
            <VThumb />
            <ScrollArrow><ChevronDown size={7} /></ScrollArrow>
          </VScroll>
        </Sheet>

        <TabsBar>
          <TabNav><span>◂</span><span>▸</span></TabNav>
          {['Step 1', 'Step 2', 'Step 3', 'Step 4', 'Step 5', 'Step 6'].map(s => (
            <SheetTab key={s} $on={s === 'Step 2'}>{s}</SheetTab>
          ))}
          <AddSheet><Plus size={7} strokeWidth={1.5} /></AddSheet>
          <Grip />
          <HScroll>
            <HArrow>◂</HArrow>
            <HThumb />
            <HArrow>▸</HArrow>
          </HScroll>
        </TabsBar>

        <StatusBar>
          <ViewBtn $on><NormalViewIcon /></ViewBtn>
          <ViewBtn><PageViewIcon /></ViewBtn>
          <ViewBtn><BreakViewIcon /></ViewBtn>
          <StatusText $ml={4}>-</StatusText>
          <ZoomTrack />
          <StatusText>+</StatusText>
          <StatusText $ml={8}>110%</StatusText>
        </StatusBar>

        <Taskbar>
          <StartBtn><WinLogo /></StartBtn>
          <SearchBox>
            <Search size={10} color="#444" strokeWidth={1.3} style={{ transform: 'scaleX(-1)' }} />
            Type here to search
          </SearchBox>
          <TaskIcons>
            <TaskIcon><Ring /></TaskIcon>
            <TaskIcon><Edge /></TaskIcon>
            <TaskIcon $open><Chrome /></TaskIcon>
            <TaskIcon><Slides /></TaskIcon>
            <TaskIcon><Store /></TaskIcon>
            <TaskIcon><IE /></TaskIcon>
            <TaskIcon><Globe /></TaskIcon>
            <TaskIcon><Mail /></TaskIcon>
            <TaskIcon><Outlook /></TaskIcon>
            <TaskIcon $active $open><ExcelIcon /></TaskIcon>
            <TaskIcon $open><WordIcon /></TaskIcon>
            <TaskIcon><PowerBi /></TaskIcon>
            <TaskIcon><GreenGlobe /></TaskIcon>
            <TaskIcon><Teams /></TaskIcon>
            <TaskIcon><ZoomApp /></TaskIcon>
            <TaskIcon $open><Folder /></TaskIcon>
            <TaskIcon $open><Recorder /></TaskIcon>
          </TaskIcons>
          <Tray>
            <Weather><CloudSun />84°F  Mostly cloudy</Weather>
            <ChevronUp size={10} strokeWidth={1.2} />
            <Volume2 size={10} strokeWidth={1.2} />
            <Wifi size={9} strokeWidth={1.2} />
            <BatteryMark />
            <Clock>2:16 PM<br />8/7/2021</Clock>
          </Tray>
        </Taskbar>
      </Win>
    </Screen>
  );
}
